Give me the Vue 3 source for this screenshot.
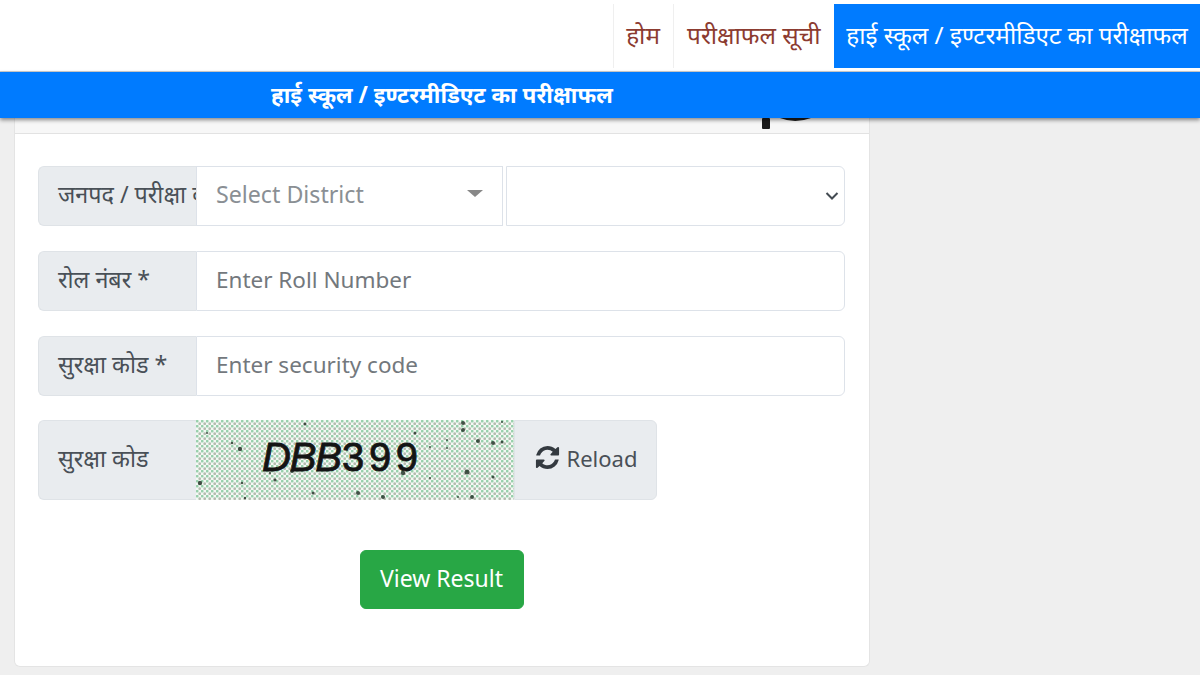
<script setup>
const navItems = [
  { label: 'होम' },
  { label: 'परीक्षाफल सूची' },
  { label: 'हाई स्कूल / इण्टरमीडिएट का परीक्षाफल', active: true }
]

// captcha noise: x, y, radius
const specks = [
  [267, 3, 2], [267, 10, 2], [282, 21, 2], [297, 23, 2], [306, 22, 1.5], [271, 52, 2.5], [297, 57, 1.5],
  [44, 29, 2.2], [36, 23, 1.2], [109, 4, 1.5], [219, 13, 1.5], [251, 20, 1], [4, 63, 2.2], [79, 60, 1.6],
  [74, 53, 1], [46, 63, 1.2], [117, 73, 1.5], [162, 73, 2], [187, 77, 2], [276, 77, 2], [49, 78, 1.2],
  [207, 53, 2.2], [96, 51, 2], [234, 58, 1], [262, 77, 1], [306, 2, 1], [11, 13, 1], [234, 27, 1], [251, 28, 1]
]
</script>

<template>
  <div class="page">
    <nav class="topnav">
      <a v-for="item in navItems" :key="item.label" :class="['nav-link', { active: item.active }]">{{ item.label }}</a>
    </nav>
    <div class="titlebar">हाई स्कूल / इण्टरमीडिएट का परीक्षाफल</div>

    <div class="card">
      <div class="card-header">
        <svg class="peek" width="50" height="11" viewBox="0 0 50 11">
          <rect x="0" y="0" width="8" height="11" rx="1" fill="#1c1c1c" />
          <path d="M18 0 Q33 6 49 0 Z" fill="#1c1c1c" />
        </svg>
      </div>
      <div class="card-body">
        <div class="row">
          <span class="addon">जनपद / परीक्षा वर्ष *</span>
          <div class="fake-select">
            <span class="placeholder">Select District</span>
            <i class="caret"></i>
          </div>
          <div class="native-select">
            <svg width="14" height="10" viewBox="0 0 14 10"><path d="M1.5 2 L7 7.5 L12.5 2" fill="none" stroke="#444b52" stroke-width="2" /></svg>
          </div>
        </div>

        <div class="row">
          <span class="addon">रोल नंबर *</span>
          <input class="control" placeholder="Enter Roll Number" />
        </div>

        <div class="row">
          <span class="addon">सुरक्षा कोड *</span>
          <input class="control" placeholder="Enter security code" />
        </div>

        <div class="row captcha-row">
          <span class="addon">सुरक्षा कोड</span>
          <svg class="captcha" width="318" height="80" viewBox="0 0 318 80">
            <defs>
              <pattern id="dots" width="5" height="5" patternUnits="userSpaceOnUse">
                <rect width="5" height="5" fill="#f4f9f4" />
                <circle cx="1.2" cy="1.2" r="1.4" fill="#98d0ac" />
                <circle cx="3.7" cy="3.7" r="1.4" fill="#b4bdb0" />
              </pattern>
            </defs>
            <rect width="318" height="80" fill="url(#dots)" />
            <circle v-for="(s, i) in specks" :key="i" :cx="s[0]" :cy="s[1]" :r="s[2]" fill="#1d2a20" opacity="0.8" />
            <text x="66" y="51" class="captcha-text slanted" textLength="80">DBB</text>
            <text x="146" y="51" class="captcha-text" textLength="76">399</text>
          </svg>
          <button class="reload">
            <svg width="27" height="27" viewBox="0 0 1792 1792"><path fill="#343a40" d="M1639 1056q0 5-1 7-64 268-268 434.5t-478 166.5q-146 0-282.5-55t-243.5-157l-129 129q-19 19-45 19t-45-19-19-45v-448q0-26 19-45t45-19h448q26 0 45 19t19 45-19 45l-137 137q71 66 161 102t187 36q134 0 250-65t186-179q11-17 53-117 8-23 30-23h192q13 0 22.5 9.5t9.5 22.5zm25-800v448q0 26-19 45t-45 19h-448q-26 0-45-19t-19-45 19-45l138-138q-148-137-349-137-134 0-250 65t-186 179q-11 17-53 117-8 23-30 23h-199q-13 0-22.5-9.5t-9.5-22.5v-7q65-268 270-434.5t480-166.5q146 0 284 55.5t245 156.5l130-129q19-19 45-19t45 19 19 45z"/></svg>
            Reload
          </button>
        </div>

        <div class="actions">
          <button class="btn-view">View Result</button>
        </div>
      </div>
    </div>
  </div>
</template>

<style>
html, body { margin: 0; background: #efefef; }
</style>

<style scoped>
.page {
  width: 1200px;
  height: 675px;
  overflow: hidden;
  background: #efefef;
  font-family: "Noto Sans", "Noto Sans Devanagari", "Open Sans", sans-serif;
  color: #495057;
}

.topnav {
  height: 72px;
  box-sizing: border-box;
  padding-top: 4px;
  display: flex;
  justify-content: flex-end;
  align-items: flex-start;
  background: #fff;
  border-bottom: 1px solid #cfcfcf;
}
.nav-link {
  height: 64px;
  display: flex;
  align-items: center;
  justify-content: center;
  box-sizing: border-box;
  padding: 0 13.5px;
  padding-bottom: 3px;
  border-left: 1px solid #efefef;
  color: #8c3b30;
  font-size: 24.3px;
  white-space: nowrap;
}
.nav-link:first-child {
  width: 60px;
  padding: 0 0 3px;
}
.nav-link.active {
  width: 366px;
  padding: 0 0 3px;
  background: #007bff;
  border-left: 0;
  color: #fff;
}

.titlebar {
  height: 46px;
  box-sizing: border-box;
  padding-left: 271px;
  padding-bottom: 2px;
  display: flex;
  align-items: center;
  background: #007bff;
  color: #fff;
  font-size: 22.5px;
  font-weight: 700;
  box-shadow: 0 2px 4px rgba(0, 0, 0, 0.45);
  position: relative;
  z-index: 1;
}

.card {
  width: 856px;
  height: 549px;
  margin-left: 14px;
  box-sizing: border-box;
  background: #fff;
  border: 1px solid #e4e4e4;
  border-top: 0;
  border-radius: 0 0 6px 6px;
}
.card-header {
  height: 15px;
  background: #f7f7f7;
  border-bottom: 1px solid #e2e2e2;
  display: flex;
  justify-content: flex-end;
  padding-right: 57px;
}
.peek { display: block; }

.card-body {
  padding: 32px 24px 0 23px;
}

.row {
  display: flex;
  height: 60px;
  margin-bottom: 25px;
}
.captcha-row {
  height: 80px;
  margin-top: -1px;
  margin-bottom: 50px;
}

.addon {
  width: 158px;
  flex: none;
  box-sizing: border-box;
  padding-left: 19px;
  padding-bottom: 4px;
  display: flex;
  align-items: center;
  overflow: hidden;
  white-space: nowrap;
  background: #e9ecef;
  border: 1px solid #dfe3e7;
  border-right: 0;
  border-radius: 6px 0 0 6px;
  font-size: 23.3px;
}

.fake-select {
  width: 307px;
  flex: none;
  box-sizing: border-box;
  padding: 0 19px 5px;
  display: flex;
  align-items: center;
  justify-content: space-between;
  border: 1px solid #dde2e9;
  background: #fff;
}
.placeholder { color: #8a8f94; font-size: 23.2px; }
.caret {
  width: 0;
  height: 0;
  border-left: 8px solid transparent;
  border-right: 8px solid transparent;
  border-top: 7px solid #888;
}

.native-select {
  flex: 1;
  margin-left: 3px;
  box-sizing: border-box;
  padding-right: 5px;
  display: flex;
  align-items: center;
  justify-content: flex-end;
  border: 1px solid #dde2e9;
  border-radius: 0 6px 6px 0;
}

.control {
  flex: 1;
  min-width: 0;
  box-sizing: border-box;
  padding: 0 19px 3px;
  border: 1px solid #dde2e9;
  border-radius: 0 6px 6px 0;
  font: inherit;
  font-size: 22.5px;
  outline: none;
}
.control::placeholder { color: #73787d; opacity: 1; }

.captcha { display: block; flex: none; }
.captcha-text {
  font-family: "Liberation Sans", sans-serif;
  font-size: 40px;
  fill: #141414;
  stroke: #141414;
  stroke-width: 0.8px;
}
.slanted { font-style: italic; }

.reload {
  width: 143px;
  flex: none;
  display: flex;
  align-items: center;
  justify-content: center;
  gap: 6px;
  padding: 0 0 5px;
  background: #e9ecef;
  border: 1px solid #dfe3e7;
  border-radius: 0 6px 6px 0;
  color: #495057;
  font: inherit;
  font-size: 22px;
}

.actions {
  display: flex;
  justify-content: center;
}
.btn-view {
  width: 164px;
  height: 59px;
  padding: 0 0 3px;
  background: #28a745;
  border: 1px solid #28a745;
  border-radius: 6px;
  color: #fff;
  font: inherit;
  font-size: 23px;
}
</style>
